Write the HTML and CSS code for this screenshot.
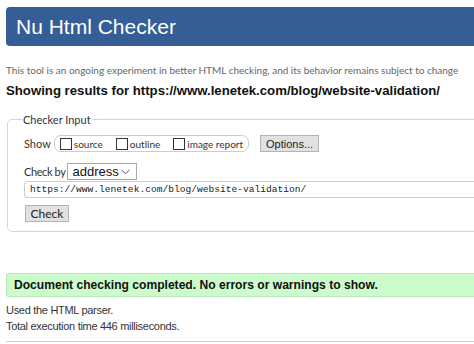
FILE: index.html
```html
<!DOCTYPE html>
<html>
<head>
<meta charset="utf-8">
<link rel="stylesheet" href="styles.css">
</head>
<body>
<div class="page">
  <h1 class="banner">Nu Html Checker</h1>
  <p class="intro">This tool is an ongoing experiment in better HTML checking, and its behavior remains subject to change</p>
  <h2 class="showing">Showing results for https://www.lenetek.com/blog/website-validation/</h2>
  <fieldset class="checker">
    <legend class="legend">Checker Input</legend>
    <div class="row show-row">
      <span class="label">Show</span>
      <span class="opts">
        <span class="opt"><span class="cb"></span>source</span>
        <span class="opt"><span class="cb"></span>outline</span>
        <span class="opt"><span class="cb"></span>image report</span>
      </span>
      <span class="btn options">Options...</span>
    </div>
    <div class="row checkby-row">
      <span class="label checkby">Check by</span>
      <span class="select">address<svg class="chev" width="9" height="6" viewBox="0 0 9 6"><path d="M0.5 0.8 L4.5 4.8 L8.5 0.8" fill="none" stroke="#555" stroke-width="1"/></svg></span>
    </div>
    <div class="url">https://www.lenetek.com/blog/website-validation/</div>
    <div class="row"><span class="btn check">Check</span></div>
  </fieldset>
  <div class="success">Document checking completed. No errors or warnings to show.</div>
  <p class="info">Used the HTML parser.</p>
  <p class="info">Total execution time 446 milliseconds.</p>
  <hr class="rule">
</div>
</body>
</html>
```
FILE: styles.css
```css
html, body { margin: 0; padding: 0; overflow: hidden; background: #fff; }
body { width: 474px; height: 344px; }
.page { width: 520px; padding: 7px 0 0 6px; font-family: "Liberation Sans", Arial, sans-serif; color: #222; }
.banner { margin: 0; height: 39px; background: #365e96; color: #fff; border-radius: 4px 0 0 4px; font-weight: normal; font-size: 21px; line-height: 39px; padding-left: 10px; }
.intro { margin: 17px 0 0 0; font-family: Lato, sans-serif; font-size: 10px; color: #666; line-height: 14px; }
.showing { margin: 5px 0 0 0; font-size: 13.2px; font-weight: bold; color: #111; line-height: 18px; }
.checker { margin: 13px 0 0 1px; border: 1px solid #d5d5d5; border-radius: 5px; padding: 4px 0 9px 16px; font-family: Lato, sans-serif; font-size: 11px; color: #333; }
.legend { padding: 0 1px; margin-left: -2px; font-size: 11px; color: #333; }
.row { display: flex; align-items: center; }
.show-row { margin-top: 5px; height: 17px; }
.label { margin-right: 3px; }
.checkby { letter-spacing: -0.4px; margin-right: 2px; }
.opts { display: flex; align-items: center; height: 15px; border: 1px solid #ccc; border-radius: 7px; padding: 0 5px 0 5px; }
.opt { display: flex; align-items: center; font-size: 10px; margin-right: 13px; }
.opt:last-child { margin-right: 0; }
.cb { width: 10px; height: 10px; border: 1px solid #333; margin-right: 2px; }
.btn { display: inline-flex; align-items: center; justify-content: center; background: #e1e1e1; border: 1px solid #b4b4b4; font-size: 11px; color: #222; height: 16px; box-sizing: border-box; }
.options { margin-left: 11px; width: 59px; height: 17px; font-family: "Liberation Sans", Arial, sans-serif; font-size: 11px; }
.checkby-row { margin-top: 11px; }
.select { display: flex; align-items: center; justify-content: space-between; width: 70px; height: 17px; box-sizing: border-box; border: 1px solid #aaa; padding: 0 6px 0 4px; font-family: "Liberation Sans", Arial, sans-serif; font-size: 13px; color: #111; }
.url { margin-top: 1px; height: 17px; box-sizing: border-box; border: 1px solid #ccc; border-radius: 4px 0 0 4px; border-right: none; padding-left: 5px; font-family: "Liberation Mono", monospace; font-size: 9.6px; line-height: 15px; color: #222; }
.check { margin-top: 7px; margin-left: 1px; width: 44px; height: 17px; font-size: 12px; }
.success { margin-top: 41px; height: 24px; box-sizing: border-box; background: #ccfccb; border: 1px solid #b8e6b8; border-right: none; border-radius: 3px 0 0 3px; padding-left: 7px; font-weight: bold; font-size: 12.1px; line-height: 22px; color: #111; }
.info { margin: 0; font-size: 11px; letter-spacing: -0.3px; color: #333; line-height: 16px; }
.success + .info { margin-top: 5px; }
.rule { margin: 7px 0 0 0; border: none; border-top: 1px solid #ccc; height: 0; }
```
